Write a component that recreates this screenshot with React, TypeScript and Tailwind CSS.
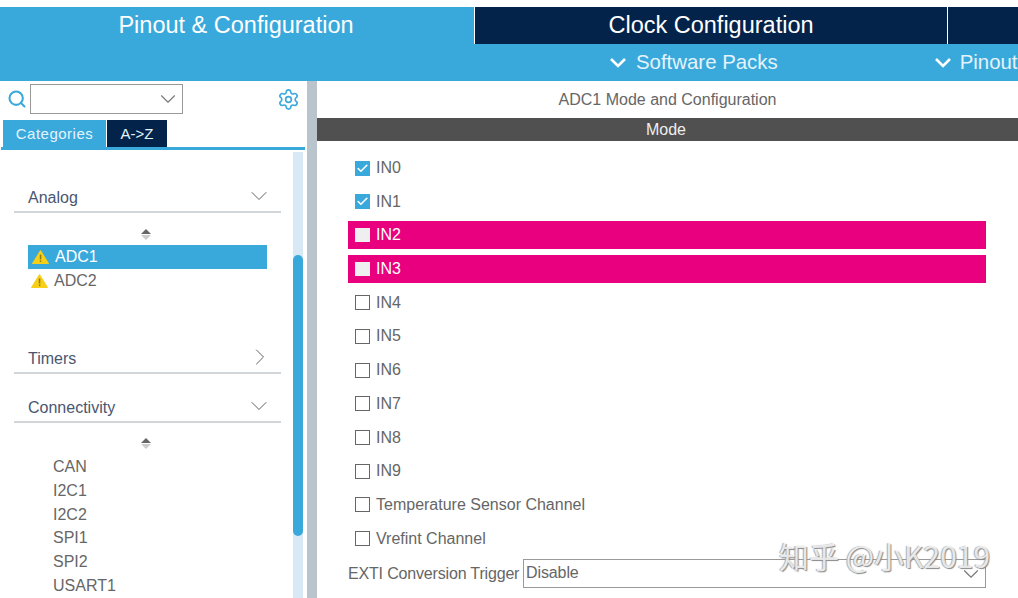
import { Check, ChevronDown, ChevronRight, Search, Settings } from 'lucide-react';

const font = { sans: "font-['Liberation_Sans',Arial,sans-serif]" };

function Warn() {
  return (
    <svg width="17" height="14" viewBox="0 0 17 14" className="shrink-0">
      <path d="M8.5 0.5 L16.5 13.5 L0.5 13.5 Z" fill="#f7cf16" stroke="#f7cf16" strokeLinejoin="round" />
      <rect x="7.8" y="4.5" width="1.5" height="5" fill="#8a7a20" />
      <rect x="7.8" y="10.5" width="1.5" height="1.5" fill="#8a7a20" />
    </svg>
  );
}

function SortArrows() {
  return (
    <div className="flex flex-col items-center gap-[1px]">
      <div className="w-0 h-0 border-x-[5px] border-x-transparent border-b-[5px] border-b-[#666]" />
      <div className="w-0 h-0 border-x-[5px] border-x-transparent border-t-[5px] border-t-[#ccc]" />
    </div>
  );
}

// bold white chevron of the sub tab row
function TabChevron() {
  return (
    <svg width="18" height="11" viewBox="0 0 18 11" className="shrink-0">
      <polyline points="2,2 9,9 16,2" fill="none" stroke="#fff" strokeWidth="2.6" />
    </svg>
  );
}

function Group({ label, open }: { label: string; open?: boolean }) {
  return (
    <div className="flex items-center justify-between h-[28px] w-[267px] ml-[14px] pl-[14px] pr-[8px] border-b-2 border-[#d3d6d9]">
      <span className="text-[16px] text-[#4a5670]">{label}</span>
      {open ? (
        <ChevronDown size={28} strokeWidth={0.8} className="text-[#555] -my-[6px] -mt-[10px]" />
      ) : (
        <ChevronRight size={28} strokeWidth={0.8} className="text-[#555] -my-[6px] -mt-[10px] -mr-[1px]" />
      )}
    </div>
  );
}

function Channel({ name, state }: { name: string; state?: 'on' | 'error' }) {
  if (state === 'error') {
    return (
      <div className="flex items-center h-[28px] bg-[#e9007f] pl-[7px] gap-[6px] text-white">
        <div className="w-[15px] h-[14px] bg-[#efefef]" />
        <span>{name}</span>
      </div>
    );
  }
  return (
    <div className="flex items-center h-[28px] pl-[7px] gap-[6px] text-[#666]">
      {state === 'on' ? (
        <div className="w-[15px] h-[15px] bg-[#39a9dc] flex items-center justify-center">
          <Check size={13} strokeWidth={3} className="text-white" />
        </div>
      ) : (
        <div className="w-[15px] h-[15px] border border-[#666]" />
      )}
      <span>{name}</span>
    </div>
  );
}

export default function App() {
  const items = ['CAN', 'I2C1', 'I2C2', 'SPI1', 'SPI2', 'USART1'];
  const plain = ['IN4', 'IN5', 'IN6', 'IN7', 'IN8', 'IN9', 'Temperature Sensor Channel', 'Vrefint Channel'];

  return (
    <div className={`relative w-[1018px] h-[598px] overflow-hidden bg-white ${font.sans}`}>
      <div className="h-[7px]" />

      <div className="flex h-[37px] text-[23.5px]">
        <div className="w-[474px] bg-[#39a9dc] text-white text-center pr-[2px] leading-[37px]">Pinout &amp; Configuration</div>
        <div className="w-[472px] ml-[1px] bg-[#03234b] text-white text-center leading-[37px]">Clock Configuration</div>
        <div className="flex-1 ml-[1px] bg-[#03234b]" />
      </div>

      <div className="flex h-[37px] bg-[#39a9dc] text-[#e4f3fb] text-[20.4px]">
        <div className="flex items-center gap-[9px] ml-[609px]">
          <TabChevron />
          <span>Software Packs</span>
        </div>
        <div className="flex items-center gap-[8px] ml-[156px] whitespace-nowrap">
          <TabChevron />
          <span>Pinout</span>
        </div>
      </div>

      <div className="flex h-[517px]">
        <div className="w-[307px] shrink-0 flex flex-col overflow-hidden">
          <div className="flex items-center h-[36px] pl-[7px] pr-[7px]">
            <Search size={20} strokeWidth={2.5} className="text-[#39a9dc] shrink-0" />
            <div className="ml-[3px] w-[153px] h-[30px] border border-[#999] flex items-center justify-end pr-[1px]">
              <ChevronDown size={26} strokeWidth={1} className="text-[#777]" />
            </div>
            <Settings size={23} strokeWidth={1.7} className="text-[#39a9dc] ml-auto" />
          </div>

          <div className="flex h-[27px] ml-[3px] mt-[3px] text-[15px]">
            <div className="w-[103px] bg-[#39a9dc] text-[#e4f3fb] text-center leading-[27px] tracking-[0.5px]">Categories</div>
            <div className="w-[60px] ml-[1px] bg-[#03234b] text-[#e4f3fb] text-center leading-[27px]">A-&gt;Z</div>
          </div>
          <div className="h-[3px] ml-[1px] w-[304px] bg-[#39a9dc]" />

          <div className="flex flex-1 min-h-0">
            <div className="w-[293px] shrink-0 flex flex-col pt-[35px]">
              <Group label="Analog" open />
              <div className="flex justify-center mt-[16px] mr-[2px]"><SortArrows /></div>
              <div className="flex items-center gap-[6px] h-[24px] ml-[28px] w-[239px] mt-[5px] pl-[4px] bg-[#39a9dc] text-white text-[16px]">
                <Warn /><span>ADC1</span>
              </div>
              <div className="flex items-center gap-[6px] h-[24px] ml-[30px] pl-[1px] text-[16px] text-[#666]">
                <Warn /><span>ADC2</span>
              </div>

              <div className="mt-[53px]"><Group label="Timers" /></div>
              <div className="mt-[21px]"><Group label="Connectivity" open /></div>
              <div className="flex justify-center mt-[15px] mr-[2px]"><SortArrows /></div>
              <div className="ml-[53px] mt-[6px] text-[16px] text-[#666] leading-[23.8px]">
                {items.map((item) => (
                  <div key={item}>{item}</div>
                ))}
              </div>
            </div>

            <div className="w-[10px] bg-[#d9e8f5] mt-[2px] pt-[103px] shrink-0">
              <div className="h-[281px] bg-[#39a9dc] rounded-[5px]" />
            </div>
          </div>
        </div>

        <div className="w-[10px] bg-[#b9c4cc] shrink-0" />

        <div className="flex-1 min-w-0 text-[16px]">
          <div className="h-[37px] text-center text-[16px] text-[#666] leading-[37px]">ADC1 Mode and Configuration</div>
          <div className="h-[23px] bg-[#505050] text-[#eee] text-center leading-[23px] pr-[3px]">Mode</div>

          <div className="ml-[31px] w-[638px] mt-[13px] flex flex-col gap-[5.7px]">
            <Channel name="IN0" state="on" />
            <Channel name="IN1" state="on" />
            <Channel name="IN2" state="error" />
            <Channel name="IN3" state="error" />
            {plain.map((name) => (
              <Channel key={name} name={name} />
            ))}
            <div className="flex items-center h-[28px] mt-[1px] text-[#666] whitespace-nowrap">
              <span className="w-[171px] tracking-[-0.17px] mt-[1px]">EXTI Conversion Trigger</span>
              <div className="ml-[4px] flex-1 h-[29px] border border-[#999] flex items-center justify-between pl-[2px] pr-[1px]">
                <span className="tracking-[-0.1px]">Disable</span>
                <ChevronDown size={26} strokeWidth={1} className="text-[#777] mt-[2px]" />
              </div>
            </div>
          </div>
        </div>
      </div>

      <div className="absolute left-[779px] top-[535px] text-[30px] leading-[40px] text-[#ffffffcc] whitespace-nowrap font-['Noto_Sans_CJK_SC',sans-serif] [text-shadow:1px_1px_1px_#888,-1px_0_1px_#aaa]">
        知乎 @小K2019
      </div>
    </div>
  );
}
